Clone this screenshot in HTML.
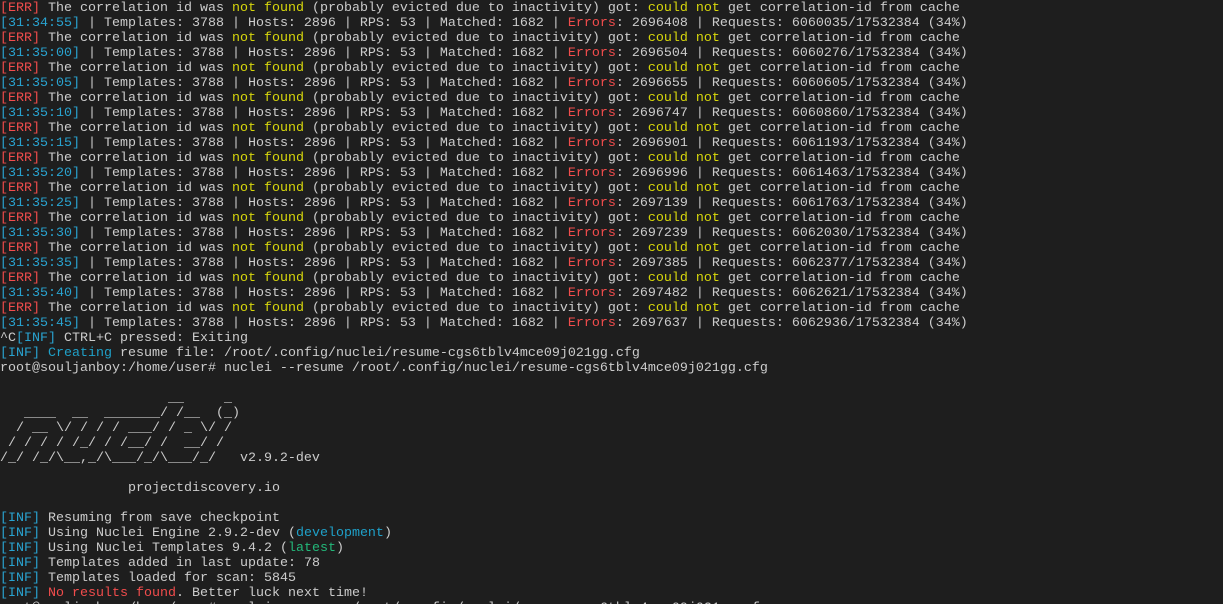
<!DOCTYPE html>
<html><head><meta charset="utf-8"><style>
html,body{margin:0;padding:0;background:#1e1e1e;width:1223px;height:604px;overflow:hidden}
pre{margin:0;padding:1px 0 0 0;font-family:"Liberation Mono","DejaVu Sans Mono",monospace;font-size:13.34px;line-height:15px;color:#cccccc;white-space:pre}
.r{color:#f14c4c}.c{color:#29a3d0}.y{color:#d7d70c}.g{color:#23b87a}.d{color:#1fa0c8}
</style></head><body><pre><span class="r">[ERR]</span> The correlation id was <span class="y">not found</span> (probably evicted due to inactivity) got: <span class="y">could not</span> get correlation-id from cache
<span class="c">[31:34:55]</span> | Templates: 3788 | Hosts: 2896 | RPS: 53 | Matched: 1682 | <span class="r">Errors</span>: 2696408 | Requests: 6060035/17532384 (34%)
<span class="r">[ERR]</span> The correlation id was <span class="y">not found</span> (probably evicted due to inactivity) got: <span class="y">could not</span> get correlation-id from cache
<span class="c">[31:35:00]</span> | Templates: 3788 | Hosts: 2896 | RPS: 53 | Matched: 1682 | <span class="r">Errors</span>: 2696504 | Requests: 6060276/17532384 (34%)
<span class="r">[ERR]</span> The correlation id was <span class="y">not found</span> (probably evicted due to inactivity) got: <span class="y">could not</span> get correlation-id from cache
<span class="c">[31:35:05]</span> | Templates: 3788 | Hosts: 2896 | RPS: 53 | Matched: 1682 | <span class="r">Errors</span>: 2696655 | Requests: 6060605/17532384 (34%)
<span class="r">[ERR]</span> The correlation id was <span class="y">not found</span> (probably evicted due to inactivity) got: <span class="y">could not</span> get correlation-id from cache
<span class="c">[31:35:10]</span> | Templates: 3788 | Hosts: 2896 | RPS: 53 | Matched: 1682 | <span class="r">Errors</span>: 2696747 | Requests: 6060860/17532384 (34%)
<span class="r">[ERR]</span> The correlation id was <span class="y">not found</span> (probably evicted due to inactivity) got: <span class="y">could not</span> get correlation-id from cache
<span class="c">[31:35:15]</span> | Templates: 3788 | Hosts: 2896 | RPS: 53 | Matched: 1682 | <span class="r">Errors</span>: 2696901 | Requests: 6061193/17532384 (34%)
<span class="r">[ERR]</span> The correlation id was <span class="y">not found</span> (probably evicted due to inactivity) got: <span class="y">could not</span> get correlation-id from cache
<span class="c">[31:35:20]</span> | Templates: 3788 | Hosts: 2896 | RPS: 53 | Matched: 1682 | <span class="r">Errors</span>: 2696996 | Requests: 6061463/17532384 (34%)
<span class="r">[ERR]</span> The correlation id was <span class="y">not found</span> (probably evicted due to inactivity) got: <span class="y">could not</span> get correlation-id from cache
<span class="c">[31:35:25]</span> | Templates: 3788 | Hosts: 2896 | RPS: 53 | Matched: 1682 | <span class="r">Errors</span>: 2697139 | Requests: 6061763/17532384 (34%)
<span class="r">[ERR]</span> The correlation id was <span class="y">not found</span> (probably evicted due to inactivity) got: <span class="y">could not</span> get correlation-id from cache
<span class="c">[31:35:30]</span> | Templates: 3788 | Hosts: 2896 | RPS: 53 | Matched: 1682 | <span class="r">Errors</span>: 2697239 | Requests: 6062030/17532384 (34%)
<span class="r">[ERR]</span> The correlation id was <span class="y">not found</span> (probably evicted due to inactivity) got: <span class="y">could not</span> get correlation-id from cache
<span class="c">[31:35:35]</span> | Templates: 3788 | Hosts: 2896 | RPS: 53 | Matched: 1682 | <span class="r">Errors</span>: 2697385 | Requests: 6062377/17532384 (34%)
<span class="r">[ERR]</span> The correlation id was <span class="y">not found</span> (probably evicted due to inactivity) got: <span class="y">could not</span> get correlation-id from cache
<span class="c">[31:35:40]</span> | Templates: 3788 | Hosts: 2896 | RPS: 53 | Matched: 1682 | <span class="r">Errors</span>: 2697482 | Requests: 6062621/17532384 (34%)
<span class="r">[ERR]</span> The correlation id was <span class="y">not found</span> (probably evicted due to inactivity) got: <span class="y">could not</span> get correlation-id from cache
<span class="c">[31:35:45]</span> | Templates: 3788 | Hosts: 2896 | RPS: 53 | Matched: 1682 | <span class="r">Errors</span>: 2697637 | Requests: 6062936/17532384 (34%)
^C<span class="c">[INF]</span> CTRL+C pressed: Exiting
<span class="c">[INF]</span> <span class="d">Creating</span> resume file: /root/.config/nuclei/resume-cgs6tblv4mce09j021gg.cfg
root@souljanboy:/home/user# nuclei --resume /root/.config/nuclei/resume-cgs6tblv4mce09j021gg.cfg

                     __     _
   ____  __  _______/ /__  (_)
  / __ \/ / / / ___/ / _ \/ /
 / / / / /_/ / /__/ /  __/ /
/_/ /_/\__,_/\___/_/\___/_/   v2.9.2-dev

                projectdiscovery.io

<span class="c">[INF]</span> Resuming from save checkpoint
<span class="c">[INF]</span> Using Nuclei Engine 2.9.2-dev (<span class="d">development</span>)
<span class="c">[INF]</span> Using Nuclei Templates 9.4.2 (<span class="g">latest</span>)
<span class="c">[INF]</span> Templates added in last update: 78
<span class="c">[INF]</span> Templates loaded for scan: 5845
<span class="c">[INF]</span> <span class="r">No results found</span>. Better luck next time!
root@souljanboy:/home/user# nuclei --resume /root/.config/nuclei/resume-cgs6tblv4mce09j021gg.cfg
</pre></body></html>
